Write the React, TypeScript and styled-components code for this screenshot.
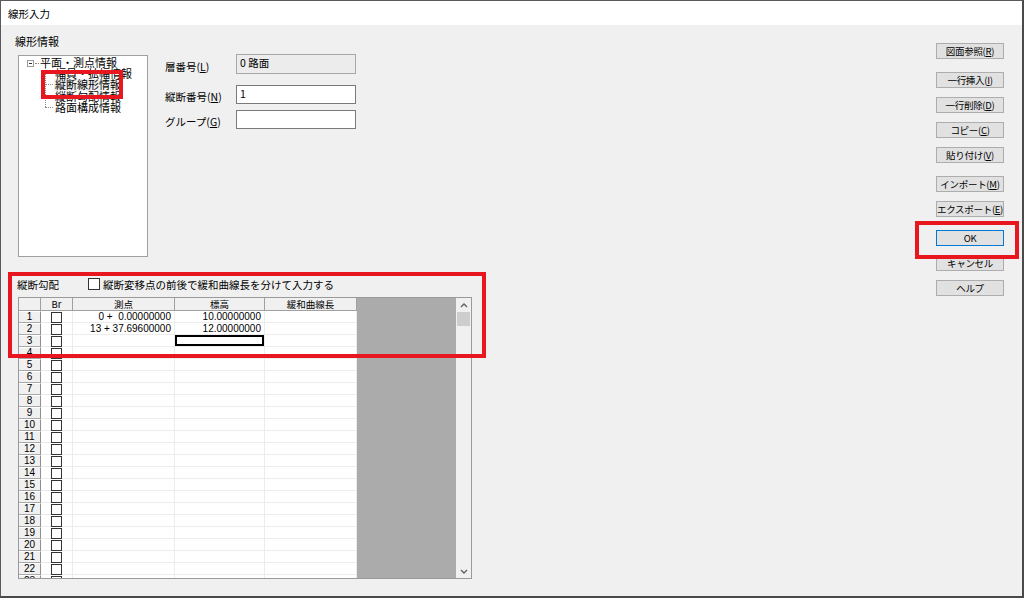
import React from "react";
import styled, { createGlobalStyle, css } from "styled-components";

const GlobalStyle = createGlobalStyle`
  html, body {
    margin: 0;
    padding: 0;
    background: #f0f0f0;
  }
  body {
    font-family: "Noto Sans CJK JP", "Liberation Sans", sans-serif;
    font-size: 11px;
    color: #000;
  }
`;

const Window = styled.div`
  position: relative;
  width: 1024px;
  height: 598px;
  box-sizing: border-box;
  border-top: 1px solid #5a5a5a;
  border-left: 1px solid #5a5a5a;
  border-right: 2px solid #4a4a4a;
  border-bottom: 2px solid #4a4a4a;
  background: #f0f0f0;
  display: flex;
  flex-direction: column;
  overflow: hidden;
`;

const TitleBar = styled.div`
  height: 24px;
  background: #fff;
  display: flex;
  align-items: center;
  padding-left: 7px;
  font-size: 10.5px;
`;

const Body = styled.div`
  flex: 1;
  display: flex;
`;

const Main = styled.div`
  width: 480px;
  padding-left: 14px;
  display: flex;
  flex-direction: column;
`;

const GroupLabel = styled.div`
  margin-top: 10px;
  line-height: 13px;
  height: 13px;
`;

const TopRow = styled.div`
  margin-top: 7px;
  padding-left: 3px;
  display: flex;
  gap: 17px;
`;

const Tree = styled.div`
  width: 130px;
  height: 202px;
  box-sizing: border-box;
  background: #fff;
  border: 1px solid #a0a0a0;
  padding: 1px 0 0 8px;
  font-size: 11px;
  line-height: 11.3px;
`;

const TreeRoot = styled.div`
  display: flex;
  align-items: center;
  height: 12px;
`;

const MinusBox = styled.span`
  width: 7px;
  height: 7px;
  box-sizing: border-box;
  border: 1px solid #9a9a9a;
  position: relative;
  margin-right: 1px;
  &::after {
    content: "";
    position: absolute;
    left: 1px;
    right: 1px;
    top: 2px;
    border-top: 1px solid #333;
  }
`;

const Stub = styled.span`
  width: 4px;
  border-top: 1px dotted #8a8a8a;
  margin-right: 1px;
`;

const TreeChildren = styled.div`
  margin-left: 18px;
  margin-top: -1px;
  position: relative;
  &::before {
    content: "";
    position: absolute;
    left: 0;
    top: 0;
    bottom: 6px;
    border-left: 1px dotted #8a8a8a;
  }
`;

const TreeItem = styled.div<{ $selected?: boolean }>`
  display: flex;
  align-items: center;
  height: 11.3px;
  white-space: nowrap;
  &::before {
    content: "";
    width: 8px;
    margin-right: 1px;
    border-top: 1px dotted #8a8a8a;
  }
  span {
    padding: 0 1px;
    ${(p) =>
      p.$selected &&
      css`
        background: #f0f0f0;
      `}
  }
`;

const Form = styled.div`
  margin-top: -1px;
  display: flex;
  flex-direction: column;
`;

const FieldRow = styled.div<{ $top: number }>`
  display: flex;
  align-items: center;
  margin-top: ${(p) => p.$top}px;
`;

const FieldLabel = styled.div`
  width: 71px;
  font-size: 10.5px;
  padding-top: 4px;
`;

const Field = styled.div<{ $readOnly?: boolean }>`
  width: 120px;
  height: ${(p) => (p.$readOnly ? 20 : 19)}px;
  box-sizing: border-box;
  border: 1px solid ${(p) => (p.$readOnly ? "#a8a8a8" : "#7a7a7a")};
  background: ${(p) => (p.$readOnly ? "#ececec" : "#fff")};
  padding: 1px 3px;
  font-size: 10.5px;
  line-height: 13px;
`;

const Section = styled.div`
  margin-top: 20px;
  padding-left: 3px;
  display: flex;
  flex-direction: column;
`;

const SectionHead = styled.div`
  display: flex;
  align-items: center;
  height: 14px;
  margin-left: -1px;
`;

const SectionTitle = styled.div`
  width: 71px;
  font-size: 10.5px;
`;

const CheckBox = styled.span<{ $size?: number }>`
  display: inline-block;
  width: ${(p) => p.$size ?? 11}px;
  height: ${(p) => p.$size ?? 11}px;
  box-sizing: border-box;
  border: 1px solid #333;
  background: #fff;
`;

const CheckLabel = styled.span`
  margin-left: 3px;
  font-size: 10.5px;
`;

const GridBox = styled.div`
  margin-top: 6px;
  width: 454px;
  height: 282px;
  box-sizing: border-box;
  border: 1px solid #9a9a9a;
  display: flex;
  overflow: hidden;
  background: #fff;
`;

const Table = styled.div`
  width: 338px;
  display: flex;
  flex-direction: column;
  overflow: hidden;
`;

const cols = [22, 32, 102, 90, 92];

const Row = styled.div`
  display: grid;
  grid-template-columns: ${cols.map((c) => c + "px").join(" ")};
  flex-shrink: 0;
`;

const HeadCell = styled.div`
  height: 13px;
  box-sizing: border-box;
  background: #f0f0f0;
  border-right: 1px solid #a0a0a0;
  border-bottom: 1px solid #a0a0a0;
  display: flex;
  align-items: center;
  justify-content: center;
  font-size: 9.5px;
  line-height: 11px;
`;

const RowHead = styled.div`
  height: 12px;
  box-sizing: border-box;
  background: #f0f0f0;
  border-right: 1px solid #8f8f8f;
  border-bottom: 1px solid #a8a8a8;
  border-top: 1px solid #fff;
  text-align: center;
  font-family: "Liberation Sans Narrow", "Liberation Sans", sans-serif;
  font-size: 10px;
  line-height: 10px;
`;

const Cell = styled.div<{ $active?: boolean; $center?: boolean }>`
  height: 12px;
  box-sizing: border-box;
  border-right: 1px solid #ececec;
  border-bottom: 1px solid #ececec;
  display: flex;
  align-items: center;
  justify-content: ${(p) => (p.$center ? "center" : "flex-end")};
  padding-right: 3px;
  font-family: "Liberation Sans Narrow", "Liberation Sans", sans-serif;
  font-size: 10px;
  white-space: pre;
  ${(p) =>
    p.$center &&
    css`
      padding-right: 0;
      padding-top: 1px;
    `}
  ${(p) =>
    p.$active &&
    css`
      box-shadow: inset 0 0 0 2px #000;
    `}
`;

const GrayArea = styled.div`
  flex: 1;
  background: #ababab;
`;

const ScrollBar = styled.div`
  width: 15px;
  background: #f0f0f0;
  display: flex;
  flex-direction: column;
  align-items: center;
`;

const Arrow = styled.div`
  height: 14px;
  width: 100%;
  display: flex;
  align-items: center;
  justify-content: center;
`;

const Thumb = styled.div`
  width: 13px;
  height: 14px;
  background: #cdcdcd;
`;

const Spacer = styled.div`
  flex: 1;
`;

const Side = styled.div`
  margin-left: auto;
  margin-right: 18px;
  padding-top: 18px;
  width: 68px;
  display: flex;
  flex-direction: column;
`;

const Button = styled.div<{ $top: number; $default?: boolean }>`
  margin-top: ${(p) => p.$top}px;
  height: 16px;
  box-sizing: border-box;
  border: 1px solid ${(p) => (p.$default ? "#0078d7" : "#adadad")};
  background: #e1e1e1;
  display: flex;
  align-items: center;
  justify-content: center;
  font-size: 9.5px;
  letter-spacing: -0.3px;
  white-space: nowrap;
  overflow: hidden;
  u {
    text-decoration: underline;
  }
`;

const Mark = styled.div`
  position: absolute;
  box-sizing: border-box;
  border: 4px solid #e8161f;
  pointer-events: none;
`;

const Chevron = ({ up }: { up?: boolean }) => (
  <svg width="8" height="5" viewBox="0 0 8 5">
    <path
      d={up ? "M1 4 L4 1 L7 4" : "M1 1 L4 4 L7 1"}
      fill="none"
      stroke="#606060"
      strokeWidth="1.4"
    />
  </svg>
);

const rows = [
  { sta: "0 +  0.00000000", elev: "10.00000000" },
  { sta: "13 + 37.69600000", elev: "12.00000000" },
  { sta: "", elev: "", active: true },
];

const buttons = [
  { top: 0, label: "図面参照(", key: "R" },
  { top: 13, label: "一行挿入(", key: "I" },
  { top: 9, label: "一行削除(", key: "D" },
  { top: 9, label: "コピー(", key: "C" },
  { top: 9, label: "貼り付け(", key: "V" },
  { top: 13, label: "インポート(", key: "M" },
  { top: 9, label: "エクスポート(", key: "E" },
  { top: 13, label: "OK", isDefault: true },
  { top: 9, label: "キャンセル" },
  { top: 9, label: "ヘルプ" },
];

export default function App() {
  const allRows = Array.from({ length: 23 }, (_, i) => rows[i] ?? { sta: "", elev: "" });
  return (
    <>
      <GlobalStyle />
      <Window>
        <TitleBar>線形入力</TitleBar>
        <Body>
          <Main>
            <GroupLabel>線形情報</GroupLabel>
            <TopRow>
              <Tree>
                <TreeRoot>
                  <MinusBox />
                  <Stub />
                  平面・測点情報
                </TreeRoot>
                <TreeChildren>
                  <TreeItem>
                    <span>幅員・拡幅情報</span>
                  </TreeItem>
                  <TreeItem $selected>
                    <span>縦断線形情報</span>
                  </TreeItem>
                  <TreeItem>
                    <span>縦断勾配情報</span>
                  </TreeItem>
                  <TreeItem>
                    <span>路面構成情報</span>
                  </TreeItem>
                </TreeChildren>
              </Tree>
              <Form>
                <FieldRow $top={0}>
                  <FieldLabel>
                    層番号(<u>L</u>)
                  </FieldLabel>
                  <Field $readOnly>0 路面</Field>
                </FieldRow>
                <FieldRow $top={11}>
                  <FieldLabel>
                    縦断番号(<u>N</u>)
                  </FieldLabel>
                  <Field>1</Field>
                </FieldRow>
                <FieldRow $top={6}>
                  <FieldLabel>
                    グループ(<u>G</u>)
                  </FieldLabel>
                  <Field />
                </FieldRow>
              </Form>
            </TopRow>
            <Section>
              <SectionHead>
                <SectionTitle>縦断勾配</SectionTitle>
                <CheckBox $size={12} />
                <CheckLabel>縦断変移点の前後で緩和曲線長を分けて入力する</CheckLabel>
              </SectionHead>
              <GridBox>
                <Table>
                  <Row>
                    <HeadCell />
                    <HeadCell>Br</HeadCell>
                    <HeadCell>測点</HeadCell>
                    <HeadCell>標高</HeadCell>
                    <HeadCell>緩和曲線長</HeadCell>
                  </Row>
                  {allRows.map((r, i) => (
                    <Row key={i}>
                      <RowHead>{i + 1}</RowHead>
                      <Cell $center>
                        <CheckBox />
                      </Cell>
                      <Cell>{r.sta}</Cell>
                      <Cell $active={"active" in r && r.active}>{r.elev}</Cell>
                      <Cell />
                    </Row>
                  ))}
                </Table>
                <GrayArea />
                <ScrollBar>
                  <Arrow>
                    <Chevron up />
                  </Arrow>
                  <Thumb />
                  <Spacer />
                  <Arrow>
                    <Chevron />
                  </Arrow>
                </ScrollBar>
              </GridBox>
            </Section>
          </Main>
          <Side>
            {buttons.map((b, i) => (
              <Button key={i} $top={b.top} $default={b.isDefault}>
                {b.label}
                {b.key && (
                  <>
                    <u>{b.key}</u>)
                  </>
                )}
              </Button>
            ))}
          </Side>
        </Body>
        <Mark style={{ left: 40, top: 69, width: 82, height: 29 }} />
        <Mark style={{ left: 7, top: 271, width: 478, height: 86 }} />
        <Mark style={{ left: 914, top: 220, width: 104, height: 38 }} />
      </Window>
    </>
  );
}
